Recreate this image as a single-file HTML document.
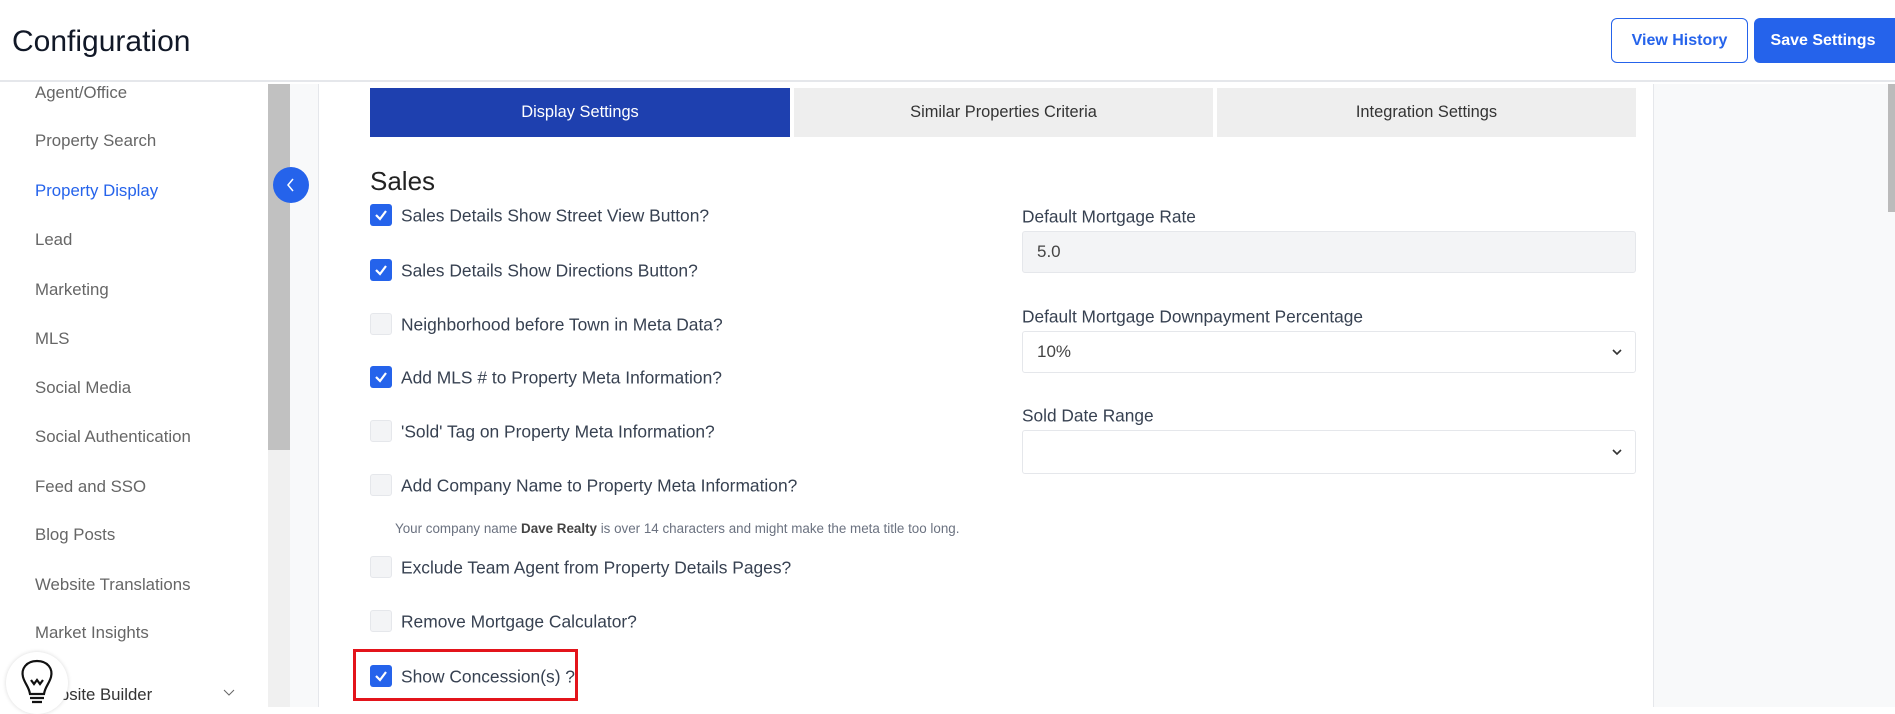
<!DOCTYPE html>
<html><head><meta charset="utf-8"><style>
*{box-sizing:border-box;margin:0;padding:0}
body{width:1895px;height:707px;overflow:hidden;background:#fff;font-family:"Liberation Sans",sans-serif;position:relative;color:#374151}
.abs{position:absolute}
.hdr{left:0;top:0;width:1895px;height:82px;border-bottom:2px solid #e5e7eb;background:#fff}
.title{left:12px;top:25px;font-size:30px;color:#111827}
.btn{top:18px;height:45px;border-radius:6px;font-size:16px;font-weight:bold;display:flex;align-items:center;justify-content:center}
.side a{position:absolute;left:35px;font-size:16.8px;color:#666;transform:translateY(-45%)}
.cb{position:absolute;left:370px;width:22px;height:22px;border-radius:3px;transform:translateY(-50%)}
.on{background:#2563eb}
.off{background:#f3f4f6;border:1px solid #e5e7eb}
.lbl{position:absolute;left:401px;font-size:17.4px;color:#374151;transform:translateY(-45%);white-space:nowrap}
.rl{position:absolute;left:1022px;font-size:17.3px;color:#374151;transform:translateY(-45%)}
.inp{position:absolute;left:1022px;width:614px;border:1px solid #e5e7eb;border-radius:3px;font-size:17px;color:#444;padding-left:14px;display:flex;align-items:center}
.tab{top:88px;height:49px;display:flex;align-items:center;justify-content:center;font-size:16.4px}
</style></head><body>
<div class="abs hdr"></div>
<div class="abs title">Configuration</div>
<div class="abs btn" style="left:1611px;width:137px;border:1.5px solid #2563eb;color:#2563eb;background:#fff">View History</div>
<div class="abs btn" style="left:1754px;width:150px;background:#2563eb;color:#fff;padding-right:12px">Save Settings</div>

<div class="abs" style="left:268px;top:84px;width:22px;height:623px;background:#c1c1c1"></div>
<div class="abs" style="left:268px;top:450px;width:22px;height:257px;background:#f0f0f0"></div>
<div class="abs" style="left:290px;top:84px;width:29px;height:623px;background:#f8f9fa;border-right:1px solid #e5e7eb"></div>
<div class="abs" style="left:273px;top:167px;width:36px;height:36px;border-radius:50%;background:#2563eb"></div>
<svg class="abs" style="left:283px;top:176px" width="16" height="18"><path d="M10 3 L5 9 L10 15" stroke="#fff" stroke-width="1.5" fill="none"/></svg>

<div class="side">
<a style="top:92px">Agent/Office</a>
<a style="top:140px">Property Search</a>
<a style="top:190px;color:#2563eb">Property Display</a>
<a style="top:239px">Lead</a>
<a style="top:289px">Marketing</a>
<a style="top:338px">MLS</a>
<a style="top:387px">Social Media</a>
<a style="top:436px">Social Authentication</a>
<a style="top:486px">Feed and SSO</a>
<a style="top:534px">Blog Posts</a>
<a style="top:584px">Website Translations</a>
<a style="top:632px">Market Insights</a>
<a style="top:694px;color:#333">Website Builder</a>
</div>
<svg class="abs" style="left:223px;top:688px" width="12" height="10"><path d="M1 2 L6 7 L11 2" stroke="#666" fill="none"/></svg>
<div class="abs" style="left:6px;top:652px;width:62px;height:62px;border-radius:50%;background:#fff;box-shadow:0 0 4px rgba(0,0,0,.15)"></div>
<svg class="abs" style="left:17px;top:658px" width="40" height="49"><path d="M20 3 C9 3 4 11 6 19 C8 26 12 29 13 36 L27 36 C28 29 32 26 34 19 C36 11 31 3 20 3 Z M13 40 L27 40 M15 44 L25 44 M14 22 L17 26 L20 22 L23 26 L26 22" stroke="#111" stroke-width="2.2" fill="none"/></svg>

<div class="abs" style="left:1653px;top:84px;width:242px;height:623px;background:#f8f9fa;border-left:1px solid #e5e7eb"></div>
<div class="abs" style="left:1888px;top:84px;width:7px;height:128px;background:#bbb"></div>

<div class="abs tab" style="left:370px;width:420px;background:#1e40af;color:#fff">Display Settings</div>
<div class="abs tab" style="left:794px;width:419px;background:#eeeeee;color:#333">Similar Properties Criteria</div>
<div class="abs tab" style="left:1217px;width:419px;background:#eeeeee;color:#333">Integration Settings</div>

<div class="abs" style="left:370px;top:166px;font-size:26px;color:#222">Sales</div>

<div class="cb on" style="top:215px"></div><div class="lbl" style="top:215px">Sales Details Show Street View Button?</div>
<div class="cb on" style="top:270px"></div><div class="lbl" style="top:270px">Sales Details Show Directions Button?</div>
<div class="cb off" style="top:324px"></div><div class="lbl" style="top:324px">Neighborhood before Town in Meta Data?</div>
<div class="cb on" style="top:377px"></div><div class="lbl" style="top:377px">Add MLS # to Property Meta Information?</div>
<div class="cb off" style="top:431px"></div><div class="lbl" style="top:431px">'Sold' Tag on Property Meta Information?</div>
<div class="cb off" style="top:485px"></div><div class="lbl" style="top:485px">Add Company Name to Property Meta Information?</div>
<div class="abs" style="left:395px;top:521px;font-size:13.4px;color:#6b7280">Your company name <b style="color:#444">Dave Realty</b> is over 14 characters and might make the meta title too long.</div>
<div class="cb off" style="top:567px"></div><div class="lbl" style="top:567px">Exclude Team Agent from Property Details Pages?</div>
<div class="cb off" style="top:621px"></div><div class="lbl" style="top:621px">Remove Mortgage Calculator?</div>
<div class="cb on" style="top:676px"></div><div class="lbl" style="top:676px">Show Concession(s) ?</div>
<div class="abs" style="left:353px;top:649px;width:225px;height:52px;border:3px solid #e3141b"></div>
<svg class="abs" style="left:370px;top:198px" width="22" height="500">
<g stroke="#fff" stroke-width="2.2" fill="none"><path d="M6 17 L10 21 L16 13"/><path d="M6 72 L10 76 L16 68"/><path d="M6 179 L10 183 L16 175"/><path d="M6 478 L10 482 L16 474"/></g></svg>

<div class="rl" style="top:216px">Default Mortgage Rate</div>
<div class="inp" style="top:231px;height:42px;background:#f3f4f6">5.0</div>
<div class="rl" style="top:316px">Default Mortgage Downpayment Percentage</div>
<div class="inp" style="top:331px;height:42px;background:#fff">10%</div>
<div class="rl" style="top:415px">Sold Date Range</div>
<div class="inp" style="top:430px;height:44px;background:#fff"></div>
<svg class="abs" style="left:1612px;top:348px" width="10" height="8"><path d="M1 2 L5 6 L9 2" stroke="#333" stroke-width="1.6" fill="none"/></svg>
<svg class="abs" style="left:1612px;top:448px" width="10" height="8"><path d="M1 2 L5 6 L9 2" stroke="#333" stroke-width="1.6" fill="none"/></svg>
</body></html>
